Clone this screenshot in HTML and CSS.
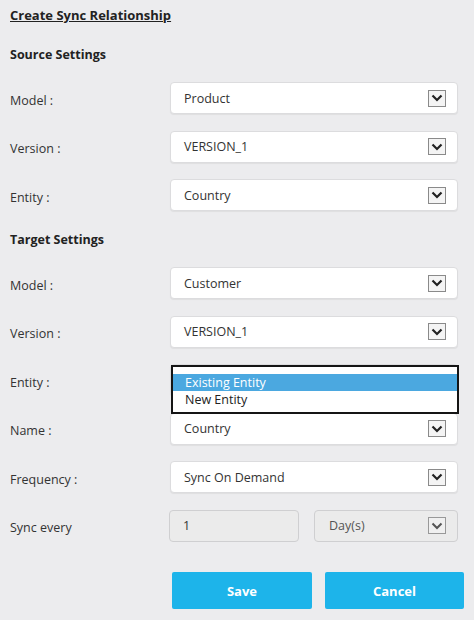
FILE: index.html
```html
<!DOCTYPE html>
<html>
<head>
<meta charset="utf-8">
<link rel="stylesheet" href="styles.css">
</head>
<body>
<div class="page">
  <h1 class="title">Create Sync Relationship</h1>
  <h2 class="section first">Source Settings</h2>
  <div class="row">
    <div class="label">Model :</div>
    <div class="select"><span>Product</span><span class="arrow"><svg width="12" height="8" viewBox="0 0 12 8"><path d="M1.5 1.5 L6 6 L10.5 1.5" fill="none" stroke="#222" stroke-width="2.2"/></svg></span></div>
  </div>
  <div class="row">
    <div class="label">Version :</div>
    <div class="select"><span>VERSION_1</span><span class="arrow"><svg width="12" height="8" viewBox="0 0 12 8"><path d="M1.5 1.5 L6 6 L10.5 1.5" fill="none" stroke="#222" stroke-width="2.2"/></svg></span></div>
  </div>
  <div class="row">
    <div class="label">Entity :</div>
    <div class="select"><span>Country</span><span class="arrow"><svg width="12" height="8" viewBox="0 0 12 8"><path d="M1.5 1.5 L6 6 L10.5 1.5" fill="none" stroke="#222" stroke-width="2.2"/></svg></span></div>
  </div>
  <h2 class="section">Target Settings</h2>
  <div class="row">
    <div class="label">Model :</div>
    <div class="select"><span>Customer</span><span class="arrow"><svg width="12" height="8" viewBox="0 0 12 8"><path d="M1.5 1.5 L6 6 L10.5 1.5" fill="none" stroke="#222" stroke-width="2.2"/></svg></span></div>
  </div>
  <div class="row">
    <div class="label">Version :</div>
    <div class="select"><span>VERSION_1</span><span class="arrow"><svg width="12" height="8" viewBox="0 0 12 8"><path d="M1.5 1.5 L6 6 L10.5 1.5" fill="none" stroke="#222" stroke-width="2.2"/></svg></span></div>
  </div>
  <div class="row">
    <div class="label">Entity :</div>
    <div class="select open-host">
      <span></span><span class="arrow"><svg width="12" height="8" viewBox="0 0 12 8"><path d="M1.5 1.5 L6 6 L10.5 1.5" fill="none" stroke="#222" stroke-width="2.2"/></svg></span>
      <ul class="popup">
        <li class="hl">Existing Entity</li>
        <li>New Entity</li>
      </ul>
    </div>
  </div>
  <div class="row">
    <div class="label">Name :</div>
    <div class="select"><span>Country</span><span class="arrow"><svg width="12" height="8" viewBox="0 0 12 8"><path d="M1.5 1.5 L6 6 L10.5 1.5" fill="none" stroke="#222" stroke-width="2.2"/></svg></span></div>
  </div>
  <div class="row">
    <div class="label">Frequency :</div>
    <div class="select"><span>Sync On Demand</span><span class="arrow"><svg width="12" height="8" viewBox="0 0 12 8"><path d="M1.5 1.5 L6 6 L10.5 1.5" fill="none" stroke="#222" stroke-width="2.2"/></svg></span></div>
  </div>
  <div class="row">
    <div class="label">Sync every</div>
    <div class="pair">
      <div class="input disabled">1</div>
      <div class="select disabled unit"><span>Day(s)</span><span class="arrow"><svg width="12" height="8" viewBox="0 0 12 8"><path d="M1.5 1.5 L6 6 L10.5 1.5" fill="none" stroke="#555" stroke-width="2"/></svg></span></div>
    </div>
  </div>
  <div class="buttons">
    <button class="btn save">Save</button>
    <button class="btn cancel">Cancel</button>
  </div>
</div>
</body>
</html>
```
FILE: styles.css
```css
html, body {
  margin: 0;
  padding: 0;
  background: #ececee;
}
body {
  font-family: "Open Sans", "Noto Sans", sans-serif;
  font-size: 13px;
  color: #333;
  width: 474px;
  height: 620px;
  overflow: hidden;
}
.page {
  padding: 5px 10px 0 10px;
}
.title {
  margin: 0;
  font-size: 13px;
  font-weight: 700;
  line-height: 20px;
  text-decoration: underline;
  color: #222;
}
.section {
  margin: 20px 0 17px;
  font-size: 12.5px;
  font-weight: 700;
  line-height: 20px;
  color: #222;
}
.section.first {
  margin-top: 20px;
}
.row {
  display: flex;
  align-items: center;
  height: 32px;
  margin-bottom: 16.5px;
}
.row + .section {
  margin-top: 19px;
}
.label {
  width: 160px;
  flex-shrink: 0;
  padding-top: 4px;
  font-size: 12.5px;
  color: #333;
}
.select, .input {
  position: relative;
  box-sizing: border-box;
  width: 288px;
  flex-shrink: 0;
  height: 32px;
  display: flex;
  align-items: center;
  justify-content: space-between;
  padding: 0 11px 0 13px;
  background: #fff;
  border: 1px solid #dcdcde;
  border-radius: 4px;
  box-shadow: 0 1px 1px rgba(0,0,0,0.06);
  font-size: 12.5px;
  color: #333;
}
.arrow {
  box-sizing: border-box;
  width: 18px;
  height: 17px;
  border: 1px solid #8a8a8a;
  background: #f4f4f4;
  display: flex;
  align-items: center;
  justify-content: center;
}
.pair {
  display: flex;
  gap: 15px;
  width: 289px;
  margin-left: -1px;
}
.input.disabled {
  width: 130px;
  background: #ebebeb;
  border-color: #cfcfd1;
  box-shadow: none;
  padding-left: 13px;
}
.select.unit {
  width: 144px;
  background: #ebebeb;
  border-color: #cfcfd1;
  box-shadow: none;
  color: #555;
  padding-left: 14px;
}
.select.unit .arrow {
  border-color: #999;
  background: #f0f0f0;
}
.popup {
  position: absolute;
  left: 0;
  top: 0;
  width: 288px;
  box-sizing: border-box;
  height: 49px;
  margin: 0;
  padding: 7px 0 0;
  list-style: none;
  background: #fff;
  border: 2px solid #151515;
  z-index: 2;
}
.popup li {
  height: 17px;
  line-height: 17px;
  padding-left: 12px;
  font-size: 12.5px;
  color: #222;
}
.popup li.hl {
  background: #4ba8e0;
  color: #fff;
}
.buttons {
  display: flex;
  gap: 13px;
  margin-top: 30.5px;
  padding-left: 162px;
}
.btn {
  flex-shrink: 0;
  width: 140px;
  height: 37px;
  border: none;
  border-radius: 2px;
  background: #1db4ea;
  color: #fff;
  font-family: "Open Sans", "Noto Sans", sans-serif;
  font-size: 13px;
  font-weight: 700;
}
.btn.cancel {
  width: 139px;
}
```
